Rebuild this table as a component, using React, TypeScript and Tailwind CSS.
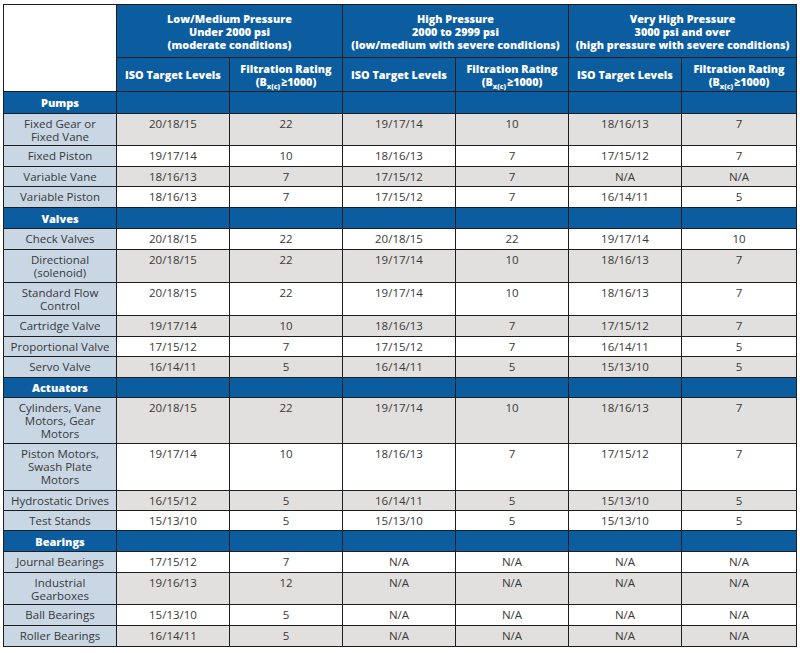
import React from "react";

type Row = { name: string[]; h: number; vals: string[]; gray: boolean };
type Section = { title: string; h: number; rows: Row[] };

const sections: Section[] = [
  {
    title: "Pumps",
    h: 22,
    rows: [
      { name: ["Fixed Gear or", "Fixed Vane"], h: 32, vals: ["20/18/15", "22", "19/17/14", "10", "18/16/13", "7"], gray: true },
      { name: ["Fixed Piston"], h: 21, vals: ["19/17/14", "10", "18/16/13", "7", "17/15/12", "7"], gray: false },
      { name: ["Variable Vane"], h: 20, vals: ["18/16/13", "7", "17/15/12", "7", "N/A", "N/A"], gray: true },
      { name: ["Variable Piston"], h: 21, vals: ["18/16/13", "7", "17/15/12", "7", "16/14/11", "5"], gray: false },
    ],
  },
  {
    title: "Valves",
    h: 21,
    rows: [
      { name: ["Check Valves"], h: 21, vals: ["20/18/15", "22", "20/18/15", "22", "19/17/14", "10"], gray: false },
      { name: ["Directional", "(solenoid)"], h: 33, vals: ["20/18/15", "22", "19/17/14", "10", "18/16/13", "7"], gray: true },
      { name: ["Standard Flow", "Control"], h: 33, vals: ["20/18/15", "22", "19/17/14", "10", "18/16/13", "7"], gray: false },
      { name: ["Cartridge Valve"], h: 21, vals: ["19/17/14", "10", "18/16/13", "7", "17/15/12", "7"], gray: true },
      { name: ["Proportional Valve"], h: 20, vals: ["17/15/12", "7", "17/15/12", "7", "16/14/11", "5"], gray: false },
      { name: ["Servo Valve"], h: 21, vals: ["16/14/11", "5", "16/14/11", "5", "15/13/10", "5"], gray: true },
    ],
  },
  {
    title: "Actuators",
    h: 20,
    rows: [
      { name: ["Cylinders, Vane", "Motors, Gear", "Motors"], h: 46, vals: ["20/18/15", "22", "19/17/14", "10", "18/16/13", "7"], gray: true },
      { name: ["Piston Motors,", "Swash Plate", "Motors"], h: 47, vals: ["19/17/14", "10", "18/16/13", "7", "17/15/12", "7"], gray: false },
      { name: ["Hydrostatic Drives"], h: 20, vals: ["16/15/12", "5", "16/14/11", "5", "15/13/10", "5"], gray: true },
      { name: ["Test Stands"], h: 20, vals: ["15/13/10", "5", "15/13/10", "5", "15/13/10", "5"], gray: false },
    ],
  },
  {
    title: "Bearings",
    h: 21,
    rows: [
      { name: ["Journal Bearings"], h: 21, vals: ["17/15/12", "7", "N/A", "N/A", "N/A", "N/A"], gray: false },
      { name: ["Industrial", "Gearboxes"], h: 32, vals: ["19/16/13", "12", "N/A", "N/A", "N/A", "N/A"], gray: true },
      { name: ["Ball Bearings"], h: 21, vals: ["15/13/10", "5", "N/A", "N/A", "N/A", "N/A"], gray: false },
      { name: ["Roller Bearings"], h: 21, vals: ["16/14/11", "5", "N/A", "N/A", "N/A", "N/A"], gray: true },
    ],
  },
];

const groups = [
  ["Low/Medium Pressure", "Under 2000 psi", "(moderate conditions)"],
  ["High Pressure", "2000 to 2999 psi", "(low/medium with severe conditions)"],
  ["Very High Pressure", "3000 psi and over", "(high pressure with severe conditions)"],
];

const cell = "border border-[#1e1e1e] p-0";
const head = `${cell} bg-[#0c5ca0] text-white font-extrabold text-center align-middle`;

function Filtration() {
  return (
    <>
      <div>Filtration Rating</div>
      <div>
        (B<span className="relative top-[3px] text-[7px] leading-none mr-[1px]">x(c)</span>≥1000)
      </div>
    </>
  );
}

export default function App() {
  return (
    <div className="w-[800px] h-[653px] bg-white pt-[4px] pl-[3px]">
      <table
        className="table-fixed border-collapse w-[793px] text-[11.5px] leading-[13px] text-[#383838]"
        style={{ fontFamily: '"Open Sans", "Liberation Sans", sans-serif' }}
      >
        <colgroup>
          <col className="w-[113px]" />
          <col className="w-[113px]" />
          <col className="w-[113px]" />
          <col className="w-[113px]" />
          <col className="w-[113px]" />
          <col className="w-[113px]" />
          <col className="w-[115px]" />
        </colgroup>
        <thead>
          <tr className="h-[53px]">
            <th rowSpan={2} className={`${cell} bg-white`} />
            {groups.map((g) => (
              <th key={g[0]} colSpan={2} className={`${head} text-[10.8px] leading-[13px]`}>
                {g.map((l) => (
                  <div key={l} className="whitespace-nowrap">{l}</div>
                ))}
              </th>
            ))}
          </tr>
          <tr className="h-[34px]">
            {groups.map((g) => (
              <React.Fragment key={g[0]}>
                <th className={`${head} text-[10.8px] whitespace-nowrap`}>ISO Target Levels</th>
                <th className={`${head} text-[10.8px] leading-[13px] whitespace-nowrap`}>
                  <Filtration />
                </th>
              </React.Fragment>
            ))}
          </tr>
        </thead>
        <tbody>
          {sections.map((s) => (
            <React.Fragment key={s.title}>
              <tr style={{ height: s.h }}>
                <td className={`${head} text-[11px]`}>{s.title}</td>
                {[0, 1, 2, 3, 4, 5].map((i) => (
                  <td key={i} className={`${cell} bg-[#0c5ca0]`} />
                ))}
              </tr>
              {s.rows.map((r) => (
                <tr key={r.name.join(" ")} style={{ height: r.h }}>
                  <td className={`${cell} bg-[#c9d7e5] text-center align-top pt-[3px] whitespace-nowrap`}>
                    {r.name.map((l) => (
                      <div key={l}>{l}</div>
                    ))}
                  </td>
                  {r.vals.map((v, i) => (
                    <td
                      key={i}
                      className={`${cell} ${r.gray ? "bg-[#e2e0de]" : "bg-white"} text-center align-top pt-[3px]`}
                    >
                      {v}
                    </td>
                  ))}
                </tr>
              ))}
            </React.Fragment>
          ))}
        </tbody>
      </table>
    </div>
  );
}
